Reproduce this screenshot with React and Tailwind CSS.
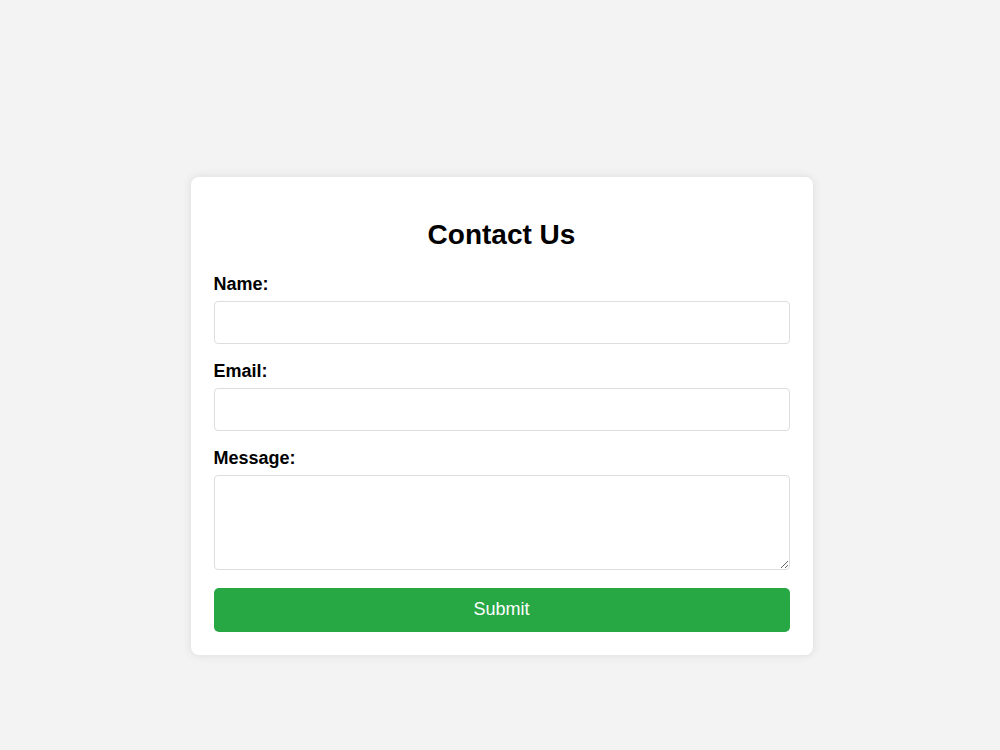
import React, { useState } from "react";

const Field = ({ label, id, type = "text", multiline = false, value, onChange, first }) => (
  <div className={first ? "" : "mt-[16px]"}>
    <label htmlFor={id} className="block text-[18px] leading-[22px] font-bold text-black mb-[6px]">
      {label}
    </label>
    {multiline ? (
      <textarea
        id={id}
        value={value}
        onChange={onChange}
        className="block w-full h-[95px] px-[10px] py-[8px] border border-[#dddddd] rounded-[4px] bg-white text-[16px] focus:outline-none"
      />
    ) : (
      <input
        id={id}
        type={type}
        value={value}
        onChange={onChange}
        className="block w-full h-[43px] px-[10px] border border-[#dddddd] rounded-[4px] bg-white text-[16px] focus:outline-none"
      />
    )}
  </div>
);

export default function App() {
  const [form, setForm] = useState({ name: "", email: "", message: "" });

  const update = (key) => (e) => setForm((prev) => ({ ...prev, [key]: e.target.value }));

  const handleSubmit = (e) => {
    e.preventDefault();
  };

  return (
    <div
      className="min-h-screen bg-[#f3f3f3] flex justify-center pt-[177px] pl-[3px]"
      style={{ fontFamily: '"Liberation Sans", Arial, sans-serif' }}
    >
      <div className="w-[622px] h-fit bg-white rounded-[8px] shadow-[0_0_10px_rgba(0,0,0,0.1)] pt-[42px] px-[23px] pb-[23px]">
        <h2 className="text-[28px] leading-[32px] font-bold text-center text-black mb-[22px]">
          Contact Us
        </h2>
        <form onSubmit={handleSubmit}>
          <Field label="Name:" id="name" value={form.name} onChange={update("name")} first />
          <Field label="Email:" id="email" type="email" value={form.email} onChange={update("email")} />
          <Field label="Message:" id="message" multiline value={form.message} onChange={update("message")} />
          <button
            type="submit"
            className="block w-full h-[44px] mt-[18px] rounded-[5px] bg-[#28a745] text-white text-[18px] leading-[20px] pb-[3px] cursor-pointer"
          >
            Submit
          </button>
        </form>
      </div>
    </div>
  );
}
